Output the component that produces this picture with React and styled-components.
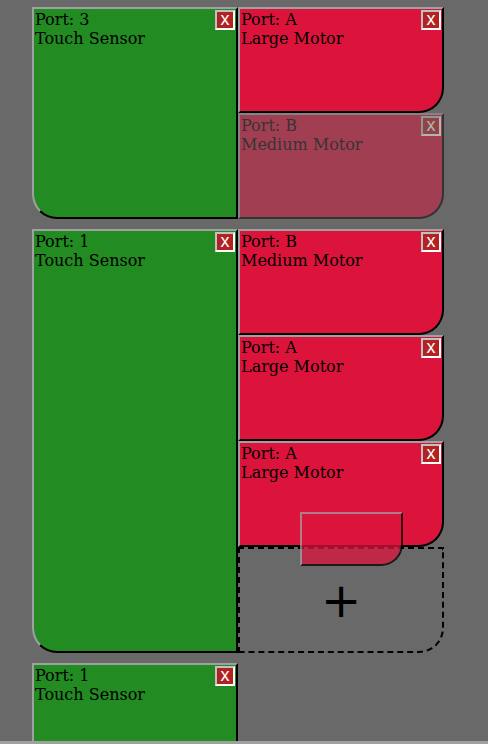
import React from "react";
import styled, { createGlobalStyle } from "styled-components";

const GlobalStyle = createGlobalStyle`
    html, body {
        margin: 0;
        padding: 0;
        background: #696969;
    }
    * {
        box-sizing: border-box;
    }
`;

const groups = [
    {
        sensor: { port: "3", name: "Touch Sensor" },
        motors: [
            { port: "A", name: "Large Motor" },
            { port: "B", name: "Medium Motor", dragging: true },
        ],
    },
    {
        sensor: { port: "1", name: "Touch Sensor" },
        motors: [
            { port: "B", name: "Medium Motor" },
            { port: "A", name: "Large Motor" },
            { port: "A", name: "Large Motor" },
        ],
        drop: true,
    },
    {
        sensor: { port: "1", name: "Touch Sensor" },
        motors: [],
    },
];

function Block({ kind, port, name, dragging }) {
    const Box = kind === "sensor" ? SensorBlock : MotorBlock;
    return (
        <Box $faded={dragging}>
            <CloseBtn>x</CloseBtn>
            <BlockText>Port: {port}</BlockText>
            <BlockText>{name}</BlockText>
        </Box>
    );
}

function App() {
    return (
        <Page>
            <GlobalStyle />
            {groups.map((g, i) => (
                <Group key={i}>
                    <Block kind="sensor" port={g.sensor.port} name={g.sensor.name} />
                    {g.motors.length > 0 && (
                        <MotorColumn>
                            {g.motors.map((m, j) => (
                                <Block
                                    key={j}
                                    kind="motor"
                                    port={m.port}
                                    name={m.name}
                                    dragging={m.dragging}
                                />
                            ))}
                            {g.drop && (
                                <DropZone>
                                    <PlusSign>+</PlusSign>
                                </DropZone>
                            )}
                        </MotorColumn>
                    )}
                </Group>
            ))}
            <DragPreview />
            <BottomEdge />
        </Page>
    );
}

export default App;

const Page = styled.div`
    position: relative;
    min-height: 100vh;
    padding: 7px 0 0 32px;
    background: #696969;
    font-family: "DejaVu Serif", serif;
    font-size: 16px;
    color: #000;
`;

const Group = styled.div`
    display: flex;
    align-items: stretch;
    margin-bottom: 10px;
`;

const BaseBlock = styled.div`
    width: 206px;
    min-height: 106px;
    border: 2px solid;
    border-color: #a0a0a0 #000 #000 #a0a0a0;
    padding: 1px 0 0 1px;
    line-height: 19px;
`;

const SensorBlock = styled(BaseBlock)`
    background: #228b22;
    border-bottom-left-radius: 25px;
`;

const MotorBlock = styled(BaseBlock)`
    height: 106px;
    background: #dc143c;
    border-bottom-right-radius: 25px;
    opacity: ${(p) => (p.$faded ? 0.5 : 1)};
`;

const MotorColumn = styled.div`
    display: flex;
    flex-direction: column;
`;

const BlockText = styled.div`
    white-space: nowrap;
`;

const CloseBtn = styled.div`
    float: right;
    width: 20px;
    height: 20px;
    margin: 0 1px 0 0;
    border: 2px solid;
    border-color: #c0c0c0 #fff #fff #c0c0c0;
    background: #b22222;
    color: #fff;
    font-family: "Liberation Sans", sans-serif;
    font-size: 18px;
    line-height: 14px;
    text-align: center;
`;

const DropZone = styled.div`
    width: 206px;
    height: 106px;
    border: 2px dashed #000;
    border-bottom-right-radius: 25px;
    display: flex;
    align-items: center;
    justify-content: center;
`;

const PlusSign = styled.span`
    font-family: "DejaVu Sans", sans-serif;
    font-size: 48px;
    line-height: 1;
    color: #000;
`;

const DragPreview = styled.div`
    position: absolute;
    left: 300px;
    top: 512px;
    width: 103px;
    height: 54px;
    background: #dc143c;
    border: 2px solid;
    border-color: #a0a0a0 #000 #000 #a0a0a0;
    border-bottom-right-radius: 22px;
    opacity: 0.75;
`;

const BottomEdge = styled.div`
    position: fixed;
    left: 0;
    right: 0;
    bottom: 0;
    height: 3px;
    background: #a0a0a0;
`;
